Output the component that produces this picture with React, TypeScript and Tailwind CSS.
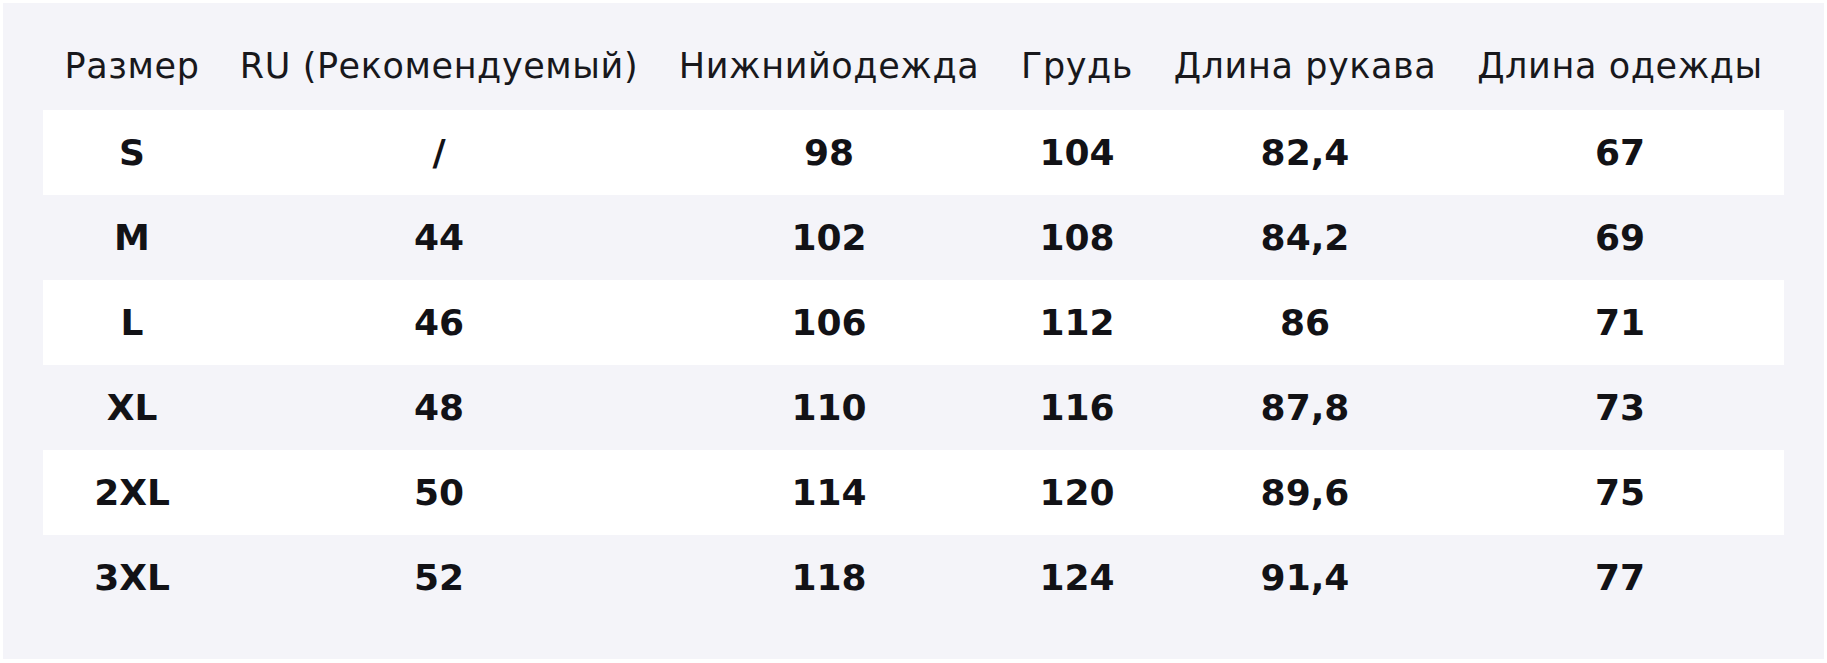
const columns = ['Размер', 'RU (Рекомендуемый)', 'Нижнийодежда', 'Грудь', 'Длина рукава', 'Длина одежды'];

const rows = [
  ['S', '/', '98', '104', '82,4', '67'],
  ['M', '44', '102', '108', '84,2', '69'],
  ['L', '46', '106', '112', '86', '71'],
  ['XL', '48', '110', '116', '87,8', '73'],
  ['2XL', '50', '114', '120', '89,6', '75'],
  ['3XL', '52', '118', '124', '91,4', '77'],
];

const grid = 'grid grid-cols-[178px_436px_344px_152px_304px_326px]';

export default function App() {
  return (
    <div className="min-h-screen bg-white p-[3px]" style={{ fontFamily: '"DejaVu Sans", Verdana, sans-serif' }}>
      <div className="h-[656px] bg-[#f4f4f9] px-[40px] pt-[19px]">
        {/* Header */}
        <div className={`${grid} h-[88px] items-center text-[35px] tracking-[0.6px] text-[#18181c]`}>
          {columns.map(c => (
            <div key={c} className="text-center whitespace-nowrap">{c}</div>
          ))}
        </div>

        {/* Body */}
        {rows.map((r, i) => (
          <div
            key={r[0]}
            className={`${grid} h-[85px] items-center text-[36px] font-bold text-[#121216] ${i % 2 === 0 ? 'bg-white' : ''}`}
          >
            {r.map((v, j) => (
              <div key={j} className="text-center whitespace-nowrap">{v}</div>
            ))}
          </div>
        ))}
      </div>
    </div>
  );
}
